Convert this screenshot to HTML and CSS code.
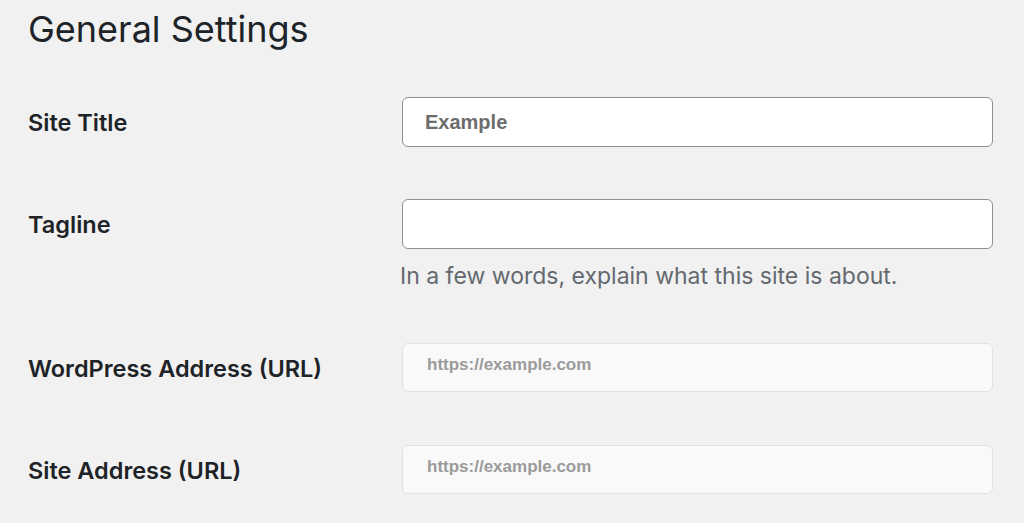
FILE: index.html
```html
<!DOCTYPE html>
<html>
<head>
    <link rel="stylesheet" href="styles.css">
</head>
<body>
    <div class="wrap">
        <h1 class="page-title">General Settings</h1>

        <div class="settings-form">
            <div class="setting-row">
                <label class="setting-label" for="blogname">Site Title</label>
                <div class="setting-field">
                    <input type="text" id="blogname" class="text-input" value="Example">
                </div>
            </div>

            <div class="setting-row">
                <label class="setting-label" for="blogdescription">Tagline</label>
                <div class="setting-field">
                    <input type="text" id="blogdescription" class="text-input" value="">
                    <p class="description">In a few words, explain what this site is about.</p>
                </div>
            </div>

            <div class="setting-row">
                <label class="setting-label" for="siteurl">WordPress Address (URL)</label>
                <div class="setting-field">
                    <input type="text" id="siteurl" class="text-input is-readonly" value="https://example.com" readonly>
                </div>
            </div>

            <div class="setting-row">
                <label class="setting-label" for="home">Site Address (URL)</label>
                <div class="setting-field">
                    <input type="text" id="home" class="text-input is-readonly" value="https://example.com" readonly>
                </div>
            </div>
        </div>
    </div>
</body>
</html>
```

FILE: styles.css
```css
body {
    margin: 0;
    padding: 0;
    background: #f1f1f1;
    color: #1d2327;
    font-family: Inter, "Liberation Sans", sans-serif;
    height: 100vh;
    overflow: hidden;
}

.wrap {
    padding: 8px 0 0 28px;
}

.page-title {
    margin: 0 0 46px;
    font-size: 36px;
    font-weight: 400;
    line-height: 43px;
}

.settings-form {
    display: flex;
    flex-direction: column;
    gap: 52px;
}

.setting-row {
    display: flex;
    align-items: flex-start;
}

.setting-label {
    width: 374px;
    height: 50px;
    display: flex;
    align-items: center;
    font-size: 23.5px;
    font-weight: 600;
}

.setting-field {
    width: 591px;
}

.text-input {
    display: block;
    width: 100%;
    height: 50px;
    box-sizing: border-box;
    margin: 0;
    padding: 0 22px;
    border: 1px solid #8c8f94;
    border-radius: 6px;
    background: #fff;
    color: #6d6d6d;
    font-family: "Liberation Sans", Arial, sans-serif;
    font-size: 20px;
    font-weight: 700;
    outline: none;
}

.text-input.is-readonly {
    height: 49px;
    padding: 0 24px 6px;
    border-color: #e2e2e3;
    background: #f9f9f9;
    color: #9b9b9b;
    font-size: 17px;
}

.description {
    margin: 12px 0 0 -2px;
    color: #646970;
    font-size: 23px;
    line-height: 30px;
}
```
